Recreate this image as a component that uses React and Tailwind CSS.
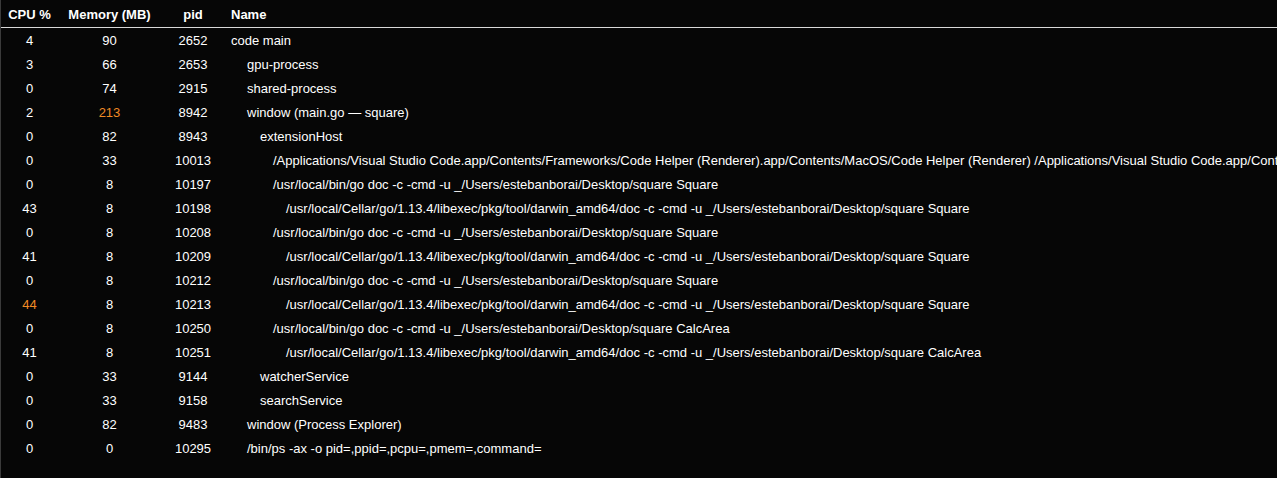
import React from 'react';

const rows = [
  { cpu: '4', mem: '90', pid: '2652', depth: 0, name: 'code main' },
  { cpu: '3', mem: '66', pid: '2653', depth: 1, name: 'gpu-process' },
  { cpu: '0', mem: '74', pid: '2915', depth: 1, name: 'shared-process' },
  { cpu: '2', mem: '213', pid: '8942', depth: 1, name: 'window (main.go — square)', memHigh: true },
  { cpu: '0', mem: '82', pid: '8943', depth: 2, name: 'extensionHost' },
  {
    cpu: '0',
    mem: '33',
    pid: '10013',
    depth: 3,
    name: '/Applications/Visual Studio Code.app/Contents/Frameworks/Code Helper (Renderer).app/Contents/MacOS/Code Helper (Renderer) /Applications/Visual Studio Code.app/Contents/Resources/app/out/bootstrap-fork',
  },
  { cpu: '0', mem: '8', pid: '10197', depth: 3, name: '/usr/local/bin/go doc -c -cmd -u _/Users/estebanborai/Desktop/square Square' },
  { cpu: '43', mem: '8', pid: '10198', depth: 4, name: '/usr/local/Cellar/go/1.13.4/libexec/pkg/tool/darwin_amd64/doc -c -cmd -u _/Users/estebanborai/Desktop/square Square' },
  { cpu: '0', mem: '8', pid: '10208', depth: 3, name: '/usr/local/bin/go doc -c -cmd -u _/Users/estebanborai/Desktop/square Square' },
  { cpu: '41', mem: '8', pid: '10209', depth: 4, name: '/usr/local/Cellar/go/1.13.4/libexec/pkg/tool/darwin_amd64/doc -c -cmd -u _/Users/estebanborai/Desktop/square Square' },
  { cpu: '0', mem: '8', pid: '10212', depth: 3, name: '/usr/local/bin/go doc -c -cmd -u _/Users/estebanborai/Desktop/square Square' },
  { cpu: '44', mem: '8', pid: '10213', depth: 4, name: '/usr/local/Cellar/go/1.13.4/libexec/pkg/tool/darwin_amd64/doc -c -cmd -u _/Users/estebanborai/Desktop/square Square', cpuHigh: true },
  { cpu: '0', mem: '8', pid: '10250', depth: 3, name: '/usr/local/bin/go doc -c -cmd -u _/Users/estebanborai/Desktop/square CalcArea' },
  { cpu: '41', mem: '8', pid: '10251', depth: 4, name: '/usr/local/Cellar/go/1.13.4/libexec/pkg/tool/darwin_amd64/doc -c -cmd -u _/Users/estebanborai/Desktop/square CalcArea' },
  { cpu: '0', mem: '33', pid: '9144', depth: 2, name: 'watcherService' },
  { cpu: '0', mem: '33', pid: '9158', depth: 2, name: 'searchService' },
  { cpu: '0', mem: '82', pid: '9483', depth: 1, name: 'window (Process Explorer)' },
  { cpu: '0', mem: '0', pid: '10295', depth: 1, name: '/bin/ps -ax -o pid=,ppid=,pcpu=,pmem=,command=' },
];

// indent per tree depth, measured off the screenshot
const indent = ['ml-0', 'ml-[16px]', 'ml-[29px]', 'ml-[42px]', 'ml-[55px]'];

const App = () => {
  return (
    <div className="h-[478px] w-full overflow-hidden bg-[#060606] border-l border-[#3a3a3a] text-white font-['Liberation_Sans',Arial,sans-serif] text-[13px]">
      <div className="flex h-[28px] pt-[3px] items-center font-bold border-b border-[#d8d8d8] whitespace-nowrap">
        <div className="w-[57px] text-center">CPU %</div>
        <div className="w-[103px] text-center">Memory (MB)</div>
        <div className="w-[64px] text-center">pid</div>
        <div className="pl-[6px]">Name</div>
      </div>

      {rows.map((r) => (
        <div key={r.pid} className="flex h-[24px] pt-[2px] items-center whitespace-nowrap">
          <div className={`w-[57px] shrink-0 text-center ${r.cpuHigh ? 'text-[#f08a24]' : ''}`}>{r.cpu}</div>
          <div className={`w-[103px] shrink-0 text-center ${r.memHigh ? 'text-[#f08a24]' : ''}`}>{r.mem}</div>
          <div className="w-[64px] shrink-0 text-center">{r.pid}</div>
          <div className="pl-[6px]">
            <span className={`inline-block ${indent[r.depth]}`}>{r.name}</span>
          </div>
        </div>
      ))}
    </div>
  );
};

export default App;
